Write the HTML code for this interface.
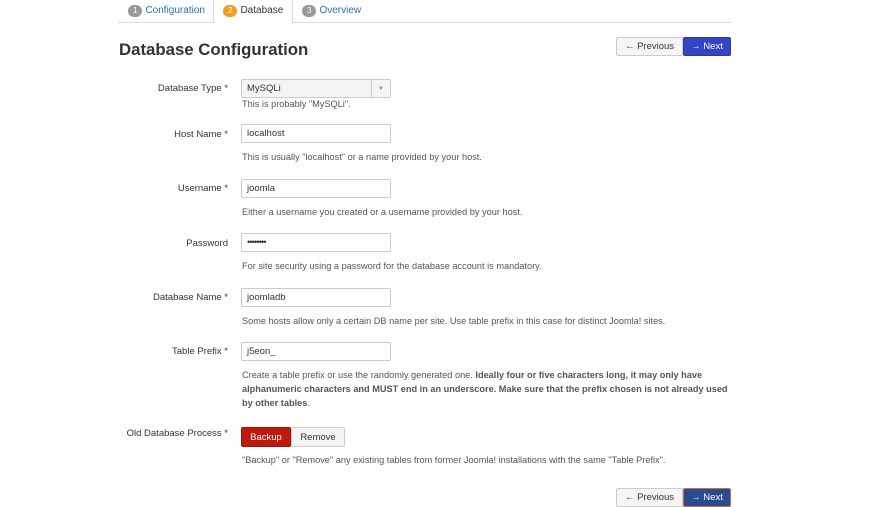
<!DOCTYPE html>
<html><head><style>
body{margin:0;width:878px;height:507px;overflow:hidden;background:#fff;font-family:"Liberation Sans",sans-serif;color:#333;position:relative}
.a{position:absolute}
.tab{font-size:10px;color:#2a6eba;top:5px}
.badge{display:inline-block;background:#999;color:#fff;border-radius:7px;font-size:8px;padding:1px 5px;margin-right:3px;line-height:10px}
.lbl{font-size:9.5px;right:650px;text-align:right}
.inp{left:241px;height:19px;border:1px solid #ccc;border-radius:2px;font-size:9.5px;line-height:18px;padding-left:5px;box-sizing:border-box;width:150px;color:#333}
.help{left:242px;font-size:9.2px;color:#555;line-height:14px;width:490px}
.btn{font-size:9.5px;height:19px;line-height:18px;box-sizing:border-box;border-radius:2px;padding:0;text-align:center;white-space:nowrap}
</style></head><body>
<div class="a" style="left:118px;top:22px;width:613px;border-top:1px solid #ddd"></div>
<div class="a" style="left:213px;top:0;width:78px;height:23px;background:#fff;border:1px solid #ddd;border-top:none;border-bottom:none"></div>
<div class="a tab" style="left:128px"><span class="badge">1</span>Configuration</div>
<div class="a tab" style="left:223px;color:#333"><span class="badge" style="background:#f0a020">2</span>Database</div>
<div class="a tab" style="left:302px"><span class="badge">3</span>Overview</div>
<div class="a" style="left:119px;top:40px;font-size:16.8px;font-weight:bold;color:#333">Database Configuration</div>
<div class="a btn" style="left:616px;top:37px;width:67px;border:1px solid #ccc;background:#f5f5f5;color:#333">&#8592; Previous</div>
<div class="a btn" style="left:683px;top:37px;width:48px;background:#3443c8;color:#fff;border:1px solid #2a38a8">&#8594; Next</div>

<div class="a lbl" style="top:83px">Database Type *</div>
<div class="a inp" style="top:79px;background:#f4f4f4">MySQLi<span style="position:absolute;right:0;top:0;width:18px;height:17px;border-left:1px solid #ccc;text-align:center;font-size:6px;color:#888">&#9660;</span></div>
<div class="a help" style="top:97px">This is probably "MySQLi".</div>

<div class="a lbl" style="top:129px">Host Name *</div>
<div class="a inp" style="top:124px">localhost</div>
<div class="a help" style="top:150px">This is usually "localhost" or a name provided by your host.</div>

<div class="a lbl" style="top:183px">Username *</div>
<div class="a inp" style="top:179px">joomla</div>
<div class="a help" style="top:205px">Either a username you created or a username provided by your host.</div>

<div class="a lbl" style="top:238px">Password</div>
<div class="a inp" style="top:233px;letter-spacing:-1px">&#8226;&#8226;&#8226;&#8226;&#8226;&#8226;&#8226;&#8226;</div>
<div class="a help" style="top:259px">For site security using a password for the database account is mandatory.</div>

<div class="a lbl" style="top:292px">Database Name *</div>
<div class="a inp" style="top:288px">joomladb</div>
<div class="a help" style="top:314px">Some hosts allow only a certain DB name per site. Use table prefix in this case for distinct Joomla! sites.</div>

<div class="a lbl" style="top:346px">Table Prefix *</div>
<div class="a inp" style="top:342px">j5eon_</div>
<div class="a help" style="top:368px">Create a table prefix or use the randomly generated one. <b>Ideally four or five characters long, it may only have alphanumeric characters and MUST end in an underscore. Make sure that the prefix chosen is not already used by other tables</b>.</div>

<div class="a lbl" style="top:428px">Old Database Process *</div>
<div class="a btn" style="left:241px;top:427px;width:50px;background:#bd1a0d;color:#fff;border:1px solid #a01208;height:20px;line-height:19px">Backup</div>
<div class="a btn" style="left:291px;top:427px;width:54px;background:#f3f3f3;border:1px solid #ccc;color:#333;height:20px;line-height:19px">Remove</div>
<div class="a help" style="top:453px">"Backup" or "Remove" any existing tables from former Joomla! installations with the same "Table Prefix".</div>

<div class="a btn" style="left:616px;top:488px;width:67px;border:1px solid #ccc;background:#f5f5f5;color:#333">&#8592; Previous</div>
<div class="a btn" style="left:683px;top:488px;width:48px;background:#2a4c8e;color:#fff;border:1px solid #c87040">&#8594; Next</div>
</body></html>
